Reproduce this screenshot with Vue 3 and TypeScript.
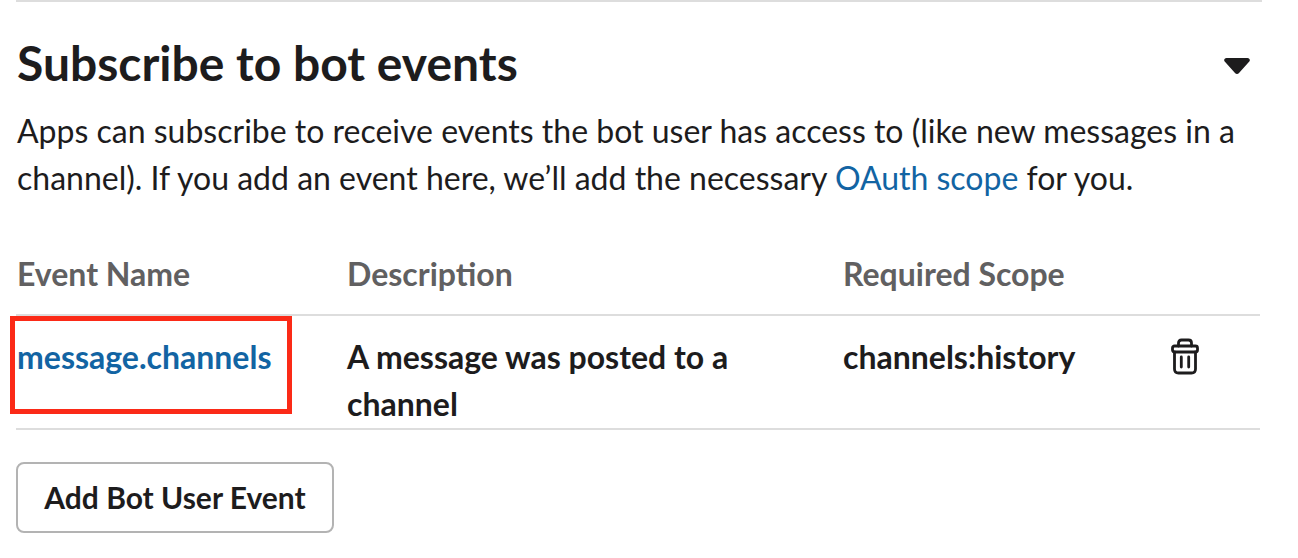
<script setup lang="ts">
const columns: string[] = ['Event Name', 'Description', 'Required Scope', '']
</script>

<template>
  <div class="page">
    <section class="section">
      <div class="head">
        <h2>Subscribe to bot events</h2>
        <svg class="caret" width="26" height="16" viewBox="0 0 26 16">
          <path d="M2.500 0h21c2 0 3 2 1.800 3.600L15 15c-1 1.300-3 1.300-4 0L.7 3.600C-.5 2 .5 0 2.500 0z" fill="#1d1c1d" />
        </svg>
      </div>
      <p class="intro">
        Apps can subscribe to receive events the bot user has access to (like new messages in a channel). If you add an event here, we’ll add the necessary <a>OAuth scope</a> for you.
      </p>
      <div class="table">
        <div v-for="col in columns" :key="col" class="th">{{ col }}</div>
        <div class="td name">
          <a class="event">message.channels</a>
          <span class="highlight"></span>
        </div>
        <div class="td desc">A message was posted to a channel</div>
        <div class="td">channels:history</div>
        <div class="td trash">
          <svg width="28" height="37" viewBox="0 0 28 37" fill="none" stroke="#1d1c1d" stroke-width="2.800" stroke-linecap="round" stroke-linejoin="round">
            <path d="M7.500 8V5q0-3 3-3h7q3 0 3 3v3" />
            <rect x="1.500" y="8" width="25" height="6" rx="2" />
            <path d="M3.500 14v17q0 4 4 4h13q4 0 4-4V14" />
            <path d="M10.300 19v10M17.700 19v10" />
          </svg>
        </div>
      </div>
      <button class="add">Add Bot User Event</button>
    </section>
  </div>
</template>

<style>
html, body {
  margin: 0;
  background: #fff;
}
</style>

<style scoped>
.page {
  width: 1298px;
  height: 558px;
  overflow: hidden;
  box-sizing: border-box;
  padding-left: 16px;
  font-family: Lato, "Liberation Sans", sans-serif;
  color: #1d1c1d;
}

.section {
  width: 1246px;
  border-top: 2px solid #dddddd;
  padding-top: 30px;
}

.head {
  display: flex;
  justify-content: space-between;
  align-items: center;
  height: 62px;
  padding: 0 12px 0 1px;
}

.caret {
  margin-top: 6px;
}

h2 {
  margin: 0;
  font-size: 48px;
  line-height: 62px;
  font-weight: 700;
}

.intro {
  margin: 13px 0 0;
  padding-left: 1px;
  width: 1235px;
  font-size: 32px;
  line-height: 47px;
}

a {
  color: #1264a3;
}

.table {
  display: grid;
  grid-template-columns: 330px 496px 320px 1fr;
  width: 1244px;
  margin-top: 49px;
  border-bottom: 2px solid #dddddd;
}

.th {
  font-size: 32px;
  font-weight: 700;
  color: #616061;
  line-height: 47px;
  height: 64px;
  padding-left: 1px;
  border-bottom: 2px solid #dddddd;
}

.td {
  font-size: 32px;
  font-weight: 700;
  line-height: 47px;
  height: 95px;
  padding: 17px 0 0 1px;
}

.desc {
  max-width: 400px;
}

.name {
  position: relative;
}

.event {
  color: #1264a3;
}

.highlight {
  position: absolute;
  left: -6px;
  top: 0;
  width: 272px;
  height: 88px;
  border: 5px solid #fb2a17;
}

.trash {
  height: 90px;
  padding: 22px 0 0 9px;
}

.add {
  display: block;
  margin-top: 32px;
  width: 318px;
  height: 71px;
  padding: 0 0 2px;
  font-family: inherit;
  font-size: 30px;
  font-weight: 700;
  color: #1d1c1d;
  background: #fff;
  border: 2px solid #b3b3b3;
  border-radius: 8px;
}
</style>
